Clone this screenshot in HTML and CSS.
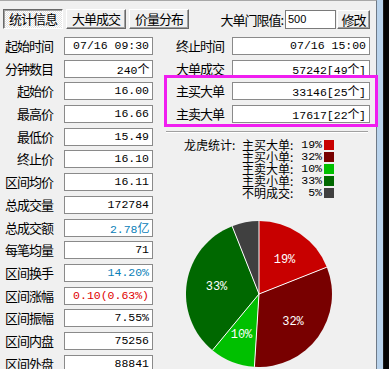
FILE: index.html
```html
<!DOCTYPE html>
<html lang="zh-CN">
<head>
    <meta charset="UTF-8">
    <title>统计信息</title>
    <link rel="stylesheet" href="styles.css">
</head>
<body>
    <div class="screen">
        <div class="panel">
            <div class="toolbar">
                <button class="tab tab-on">统计信息</button>
                <button class="tab">大单成交</button>
                <button class="tab">价量分布</button>
                <span class="limit-label">大单门限值:</span>
                <input class="limit-input" type="text" value="500">
                <button class="tab btn-edit">修改</button>
            </div>

            <div class="content">
                <div class="stats">
                    <div class="row"><span class="label">起始时间</span><span class="box">07/16 09:30</span></div>
                    <div class="row"><span class="label">分钟数目</span><span class="box">240<i>个</i></span></div>
                    <div class="row"><span class="label">起始价</span><span class="box">16.00</span></div>
                    <div class="row"><span class="label">最高价</span><span class="box">16.66</span></div>
                    <div class="row"><span class="label">最低价</span><span class="box">15.49</span></div>
                    <div class="row"><span class="label">终止价</span><span class="box">16.10</span></div>
                    <div class="row"><span class="label">区间均价</span><span class="box">16.11</span></div>
                    <div class="row"><span class="label">总成交量</span><span class="box">172784</span></div>
                    <div class="row"><span class="label">总成交额</span><span class="box blue">2.78<i>亿</i></span></div>
                    <div class="row"><span class="label">每笔均量</span><span class="box">71</span></div>
                    <div class="row"><span class="label">区间换手</span><span class="box blue">14.20%</span></div>
                    <div class="row"><span class="label">区间涨幅</span><span class="box red">0.10(0.63%)</span></div>
                    <div class="row"><span class="label">区间振幅</span><span class="box">7.55%</span></div>
                    <div class="row"><span class="label">区间内盘</span><span class="box">75256</span></div>
                    <div class="row"><span class="label">区间外盘</span><span class="box">88841</span></div>
                </div>

                <div class="side">
                    <div class="row"><span class="label">终止时间</span><span class="box">07/16 15:00</span></div>
                    <div class="row"><span class="label">大单成交</span><span class="box">57242[49<i>个</i>]</span></div>
                    <div class="row"><span class="label">主买大单</span><span class="box">33146[25<i>个</i>]</span></div>
                    <div class="row"><span class="label">主卖大单</span><span class="box">17617[22<i>个</i>]</span></div>

                    <div class="sep"></div>

                    <div class="legend">
                        <span class="legend-title">龙虎统计:</span>
                        <span class="legend-name">主买大单:</span><span class="legend-pct">19%</span><span class="swatch c-buy-big"></span>
                        <span class="legend-name">主买小单:</span><span class="legend-pct">32%</span><span class="swatch c-buy-small"></span>
                        <span class="legend-name">主卖大单:</span><span class="legend-pct">10%</span><span class="swatch c-sell-big"></span>
                        <span class="legend-name">主卖小单:</span><span class="legend-pct">33%</span><span class="swatch c-sell-small"></span>
                        <span class="legend-name">不明成交:</span><span class="legend-pct">5%</span><span class="swatch c-unknown"></span>
                    </div>

                    <svg class="pie" width="146" height="146" viewBox="0 0 146 146">
                        <path d="M73 73 L73 0 A73 73 0 0 1 140.87 46.13 Z" fill="#c80000"/>
                        <path d="M73 73 L140.87 46.13 A73 73 0 0 1 68.42 145.86 Z" fill="#780000"/>
                        <path d="M73 73 L68.42 145.86 A73 73 0 0 1 26.47 129.25 Z" fill="#00c000"/>
                        <path d="M73 73 L26.47 129.25 A73 73 0 0 1 46.13 5.13 Z" fill="#006800"/>
                        <path d="M73 73 L46.13 5.13 A73 73 0 0 1 73 0 Z" fill="#404040"/>
                        <g stroke="#ffffff" stroke-width="1">
                            <line x1="73" y1="73" x2="73" y2="0"/>
                            <line x1="73" y1="73" x2="140.87" y2="46.13"/>
                            <line x1="73" y1="73" x2="68.42" y2="145.86"/>
                            <line x1="73" y1="73" x2="26.47" y2="129.25"/>
                            <line x1="73" y1="73" x2="46.13" y2="5.13"/>
                        </g>
                        <g class="pie-text">
                            <text x="98.5" y="41.5">19%</text>
                            <text x="107" y="103.5">32%</text>
                            <text x="55.5" y="116.5">10%</text>
                            <text x="30.5" y="68.5">33%</text>
                        </g>
                    </svg>
                </div>
            </div>
        </div>
        <div class="edge-blue"></div>
        <div class="edge-dark"></div>
        <div class="highlight"></div>
    </div>
</body>
</html>
```

FILE: styles.css
```css
:root {
    --bg: #f0f0f0;
    --box-line: #8a8a8a;
    --cjk: "Noto Sans CJK SC", "DejaVu Sans", sans-serif;
    --num: "Liberation Mono", "DejaVu Sans Mono", monospace;
}

* {
    box-sizing: border-box;
    margin: 0;
    padding: 0;
}

body {
    width: 389px;
    height: 369px;
    overflow: hidden;
    background: #000;
    font-family: var(--cjk);
    font-size: 13px;
    color: #000;
}

.screen {
    position: relative;
    display: flex;
    height: 369px;
}

.panel {
    width: 377px;
    height: 369px;
    overflow: hidden;
    background: var(--bg);
    border-top: 1px solid #a8a8a8;
    border-right: 1px solid #6e7a88;
}

.edge-blue {
    width: 6px;
    background: #b9d3ec;
}

.edge-dark {
    flex: 1;
    background: #050505;
    border-left: 1px solid #1c1c1c;
}

/* top bar */

.toolbar {
    display: flex;
    align-items: center;
    gap: 3px;
    height: 20px;
    margin-top: 8px;
    padding: 0 6px 0 3px;
}

.tab {
    height: 20px;
    padding: 0 5px;
    font-family: var(--cjk);
    font-size: 13px;
    letter-spacing: -1px;
    line-height: 18px;
    color: #000;
    background: var(--bg);
    border: 1px solid;
    border-color: #ffffff #696969 #696969 #ffffff;
    box-shadow: inset -1px -1px #a0a0a0;
}

.tab-on {
    border-color: #696969 #ffffff #ffffff #696969;
    box-shadow: inset 1px 1px #a0a0a0;
    background: repeating-conic-gradient(#ffffff 0 25%, #e2e2e2 0 50%) 0 0 / 2px 2px;
}

.limit-label {
    margin-left: auto;
    letter-spacing: -1px;
}

.limit-input {
    width: 51px;
    height: 19px;
    padding: 0 2px;
    margin-left: -1px;
    font-family: "Liberation Sans", sans-serif;
    font-size: 11px;
    background: #fff;
    border: 1px solid #7a7a7a;
    outline: none;
}

.btn-edit {
    width: 33px;
    height: 19px;
    padding: 0;
    margin-left: -2px;
}

/* field rows */

.content {
    display: flex;
    margin-top: 8px;
}

.stats,
.side {
    display: flex;
    flex-direction: column;
    gap: 4.7px;
}

.side {
    margin-left: 11px;
}

.row {
    display: flex;
    align-items: center;
    gap: 11px;
    height: 18px;
}

.label {
    width: 53px;
    text-align: right;
    letter-spacing: -1px;
    white-space: nowrap;
    line-height: 18px;
}

.side .label {
    width: 60px;
}

.side .row {
    gap: 8px;
}

.box {
    width: 89px;
    height: 18px;
    padding-right: 3px;
    background: #fff;
    border: 1px solid var(--box-line);
    text-align: right;
    font-family: var(--num);
    font-size: 11.5px;
    line-height: 16px;
    white-space: nowrap;
}

.side .box {
    width: 138px;
}

.box i {
    font-style: normal;
    font-family: var(--cjk);
    font-size: 12px;
    letter-spacing: -0.5px;
}

.blue {
    color: #0a80b8;
}

.red {
    color: #e00000;
}

.sep {
    width: 202px;
    margin: 2.8px 0 0 2px;
    height: 2px;
    border-top: 1px solid #a0a0a0;
    border-bottom: 1px solid #ffffff;
}

/* legend and pie */

.legend {
    display: grid;
    grid-template-columns: 58px 56px 24px 10px;
    grid-auto-rows: 12px;
    align-items: center;
    margin: 1.5px 0 0 20px;
    font-size: 12px;
    line-height: 12px;
}

.legend-title {
    grid-row: 1;
    grid-column: 1;
}

.legend-name {
    grid-column: 2;
    white-space: nowrap;
}

.legend-pct {
    grid-column: 3;
    text-align: right;
    font-family: var(--num);
    font-size: 11.5px;
}

.swatch {
    grid-column: 4;
    width: 10px;
    height: 10px;
    margin-left: 2px;
}

.c-buy-big { background: #c80000; }
.c-buy-small { background: #780000; }
.c-sell-big { background: #00c000; }
.c-sell-small { background: #006800; }
.c-unknown { background: #404040; }

.pie {
    display: block;
    margin: 18px 0 0 21.5px;
}

.pie-text {
    fill: #ffffff;
    font-family: var(--num);
    font-size: 12px;
    text-anchor: middle;
}

.highlight {
    position: absolute;
    left: 164px;
    top: 75px;
    width: 214px;
    height: 52px;
    border: 3px solid #f01ef0;
}
```
